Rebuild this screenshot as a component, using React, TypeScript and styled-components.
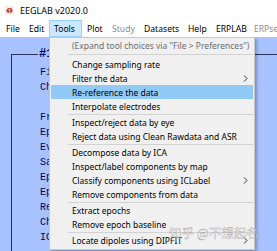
import React from 'react';
import styled, { createGlobalStyle } from 'styled-components';

const Global = createGlobalStyle`
  html, body { margin: 0; padding: 0; }
  body {
    width: 277px; height: 251px; overflow: hidden;
    background: #a8c2ff;
    font-family: "Noto Sans", "Liberation Sans", sans-serif;
  }
`;

const Window = styled.div`
  position: relative;
  width: 277px;
  height: 251px;
  overflow: hidden;
  display: flex;
  flex-direction: column;
  background: #a8c2ff;
`;

const TitleBar = styled.div`
  height: 20px;
  flex: none;
  background: #fff;
  display: flex;
  align-items: center;
  padding-left: 5px;
  gap: 6px;
  font-size: 9px;
  color: #000;
`;

const MenuBar = styled.div`
  height: 17px;
  flex: none;
  background: #fff;
  display: flex;
  align-items: stretch;
  padding-left: 1px;
`;

const MenuBarItem = styled.div<{ $w: number; $active?: boolean; $disabled?: boolean }>`
  width: ${(p) => p.$w}px;
  flex: none;
  box-sizing: border-box;
  padding-left: 4px;
  display: flex;
  align-items: center;
  white-space: nowrap;
  font-size: 8.6px;
  color: ${(p) => (p.$disabled ? '#8d8d8d' : '#000')};
  background: ${(p) => (p.$active ? '#cce8ff' : 'transparent')};
  border: 1px solid ${(p) => (p.$active ? '#99d1ff' : 'transparent')};
`;

const Content = styled.div`
  flex: 1;
  min-height: 0;
  padding: 17px 0 0 11px;
`;

const Frame = styled.div`
  height: 300px;
  border-top: 1px solid #27315e;
  border-left: 1px solid #27315e;
  display: flex;
  flex-direction: column;
  align-items: flex-start;
`;

const FrameTitle = styled.div`
  margin: -7px 0 0 26px;
  height: 12px;
  padding: 0 1px;
  background: #a8c2ff;
  font-family: "Liberation Mono", monospace;
  font-weight: bold;
  font-size: 12px;
  line-height: 12px;
  color: #000066;
  white-space: nowrap;
`;

const Labels = styled.div`
  margin: 5px 0 0 28px;
  display: flex;
  flex-direction: column;
`;

const Label = styled.div`
  height: 15px;
  line-height: 15px;
  font-family: "Liberation Mono", monospace;
  font-size: 10px;
  color: #000066;
  white-space: nowrap;
`;

const Dropdown = styled.div`
  position: absolute;
  left: 49px;
  top: 37px;
  width: 206px;
  background: #f0f0f0;
  border: 1px solid #c8c8c8;
  box-shadow: 2px 2px 3px rgba(0, 0, 0, 0.28);
  padding: 0 1px 2px 1px;
  box-sizing: border-box;
  display: flex;
  flex-direction: column;
`;

const Item = styled.div<{ $hl?: boolean; $dim?: boolean }>`
  height: 14px;
  flex: none;
  display: flex;
  align-items: center;
  justify-content: space-between;
  padding: 0 5px 0 21px;
  font-size: 8.5px;
  white-space: nowrap;
  color: ${(p) => (p.$dim ? '#6d6d6d' : '#000')};
  background: ${(p) => (p.$hl ? '#91c9f7' : 'transparent')};
`;

const Sep = styled.div<{ $h: number }>`
  height: ${(p) => p.$h}px;
  flex: none;
  display: flex;
  align-items: center;
  padding-left: 17px;
  &::after {
    content: '';
    flex: 1;
    height: 1px;
    background: #d2d2d2;
  }
`;

const Watermark = styled.div`
  position: absolute;
  left: 169px;
  top: 223px;
  font-family: "Noto Sans CJK SC", sans-serif;
  font-size: 12.5px;
  color: rgba(255, 255, 255, 0.55);
  -webkit-text-stroke: 0.4px rgba(110, 110, 110, 0.55);
  white-space: nowrap;
  pointer-events: none;
`;

const Chevron = () => (
  <svg width="5" height="7" viewBox="0 0 5 7">
    <path d="M1 0.5 L4 3.5 L1 6.5" fill="none" stroke="#333" strokeWidth="1" />
  </svg>
);

const AppIcon = () => (
  <svg width="9" height="9" viewBox="0 0 9 9">
    <rect x="0" y="0" width="9" height="9" fill="#f4ecea" />
    <path d="M1.5 6 C1 3.5 3 1.5 5 2 C7 2 8 4 7.2 6 C6 7 3 7 1.5 6 Z" fill="#b33a2a" />
    <path d="M3 4 L6 4 M4.5 2.5 L4.5 6.5" stroke="#f4d0c8" strokeWidth="0.7" />
  </svg>
);

type Entry =
  | { t: string; sep?: false; arrow?: boolean; hl?: boolean; dim?: boolean }
  | { sep: true; h: number };

const entries: Entry[] = [
  { t: '(Expand tool choices via "File > Preferences")', dim: true },
  { sep: true, h: 5 },
  { t: 'Change sampling rate' },
  { t: 'Filter the data', arrow: true },
  { t: 'Re-reference the data', hl: true },
  { t: 'Interpolate electrodes' },
  { sep: true, h: 2 },
  { t: 'Inspect/reject data by eye' },
  { t: 'Reject data using Clean Rawdata and ASR' },
  { sep: true, h: 2 },
  { t: 'Decompose data by ICA' },
  { t: 'Inspect/label components by map' },
  { t: 'Classify components using ICLabel', arrow: true },
  { t: 'Remove components from data' },
  { sep: true, h: 2 },
  { t: 'Extract epochs' },
  { t: 'Remove epoch baseline' },
  { sep: true, h: 2 },
  { t: 'Locate dipoles using DIPFIT', arrow: true },
];

const labels = [
  'Filename: none',
  'Channels per frame',
  '',
  'Frames per epoch',
  'Epochs',
  'Events',
  'Sampling rate (Hz)',
  'Epoch start (sec)',
  'Epoch end (sec)',
  'Reference',
  'Channel locations',
  'ICA weights',
];

const menus: { t: string; w: number; active?: boolean; disabled?: boolean }[] = [
  { t: 'File', w: 23 },
  { t: 'Edit', w: 25 },
  { t: 'Tools', w: 33, active: true },
  { t: 'Plot', w: 25 },
  { t: 'Study', w: 32, disabled: true },
  { t: 'Datasets', w: 44 },
  { t: 'Help', w: 28 },
  { t: 'ERPLAB', w: 38 },
  { t: 'ERPset', w: 40, disabled: true },
];

export default function App() {
  return (
    <>
      <Global />
      <Window>
        <TitleBar>
          <AppIcon />
          <span>EEGLAB v2020.0</span>
        </TitleBar>
        <MenuBar>
          {menus.map((m) => (
            <MenuBarItem key={m.t} $w={m.w} $active={m.active} $disabled={m.disabled}>
              {m.t}
            </MenuBarItem>
          ))}
        </MenuBar>
        <Content>
          <Frame>
            <FrameTitle>#1: EEG data</FrameTitle>
            <Labels>
              {labels.map((l, i) => (
                <Label key={i}>{l || '\u00a0'}</Label>
              ))}
            </Labels>
          </Frame>
        </Content>
        <Dropdown>
          {entries.map((e, i) =>
            e.sep ? (
              <Sep key={i} $h={e.h} />
            ) : (
              <Item key={i} $hl={e.hl} $dim={e.dim}>
                <span>{e.t}</span>
                {e.arrow && <Chevron />}
              </Item>
            )
          )}
        </Dropdown>
        <Watermark>知乎 @不想起名</Watermark>
      </Window>
    </>
  );
}
